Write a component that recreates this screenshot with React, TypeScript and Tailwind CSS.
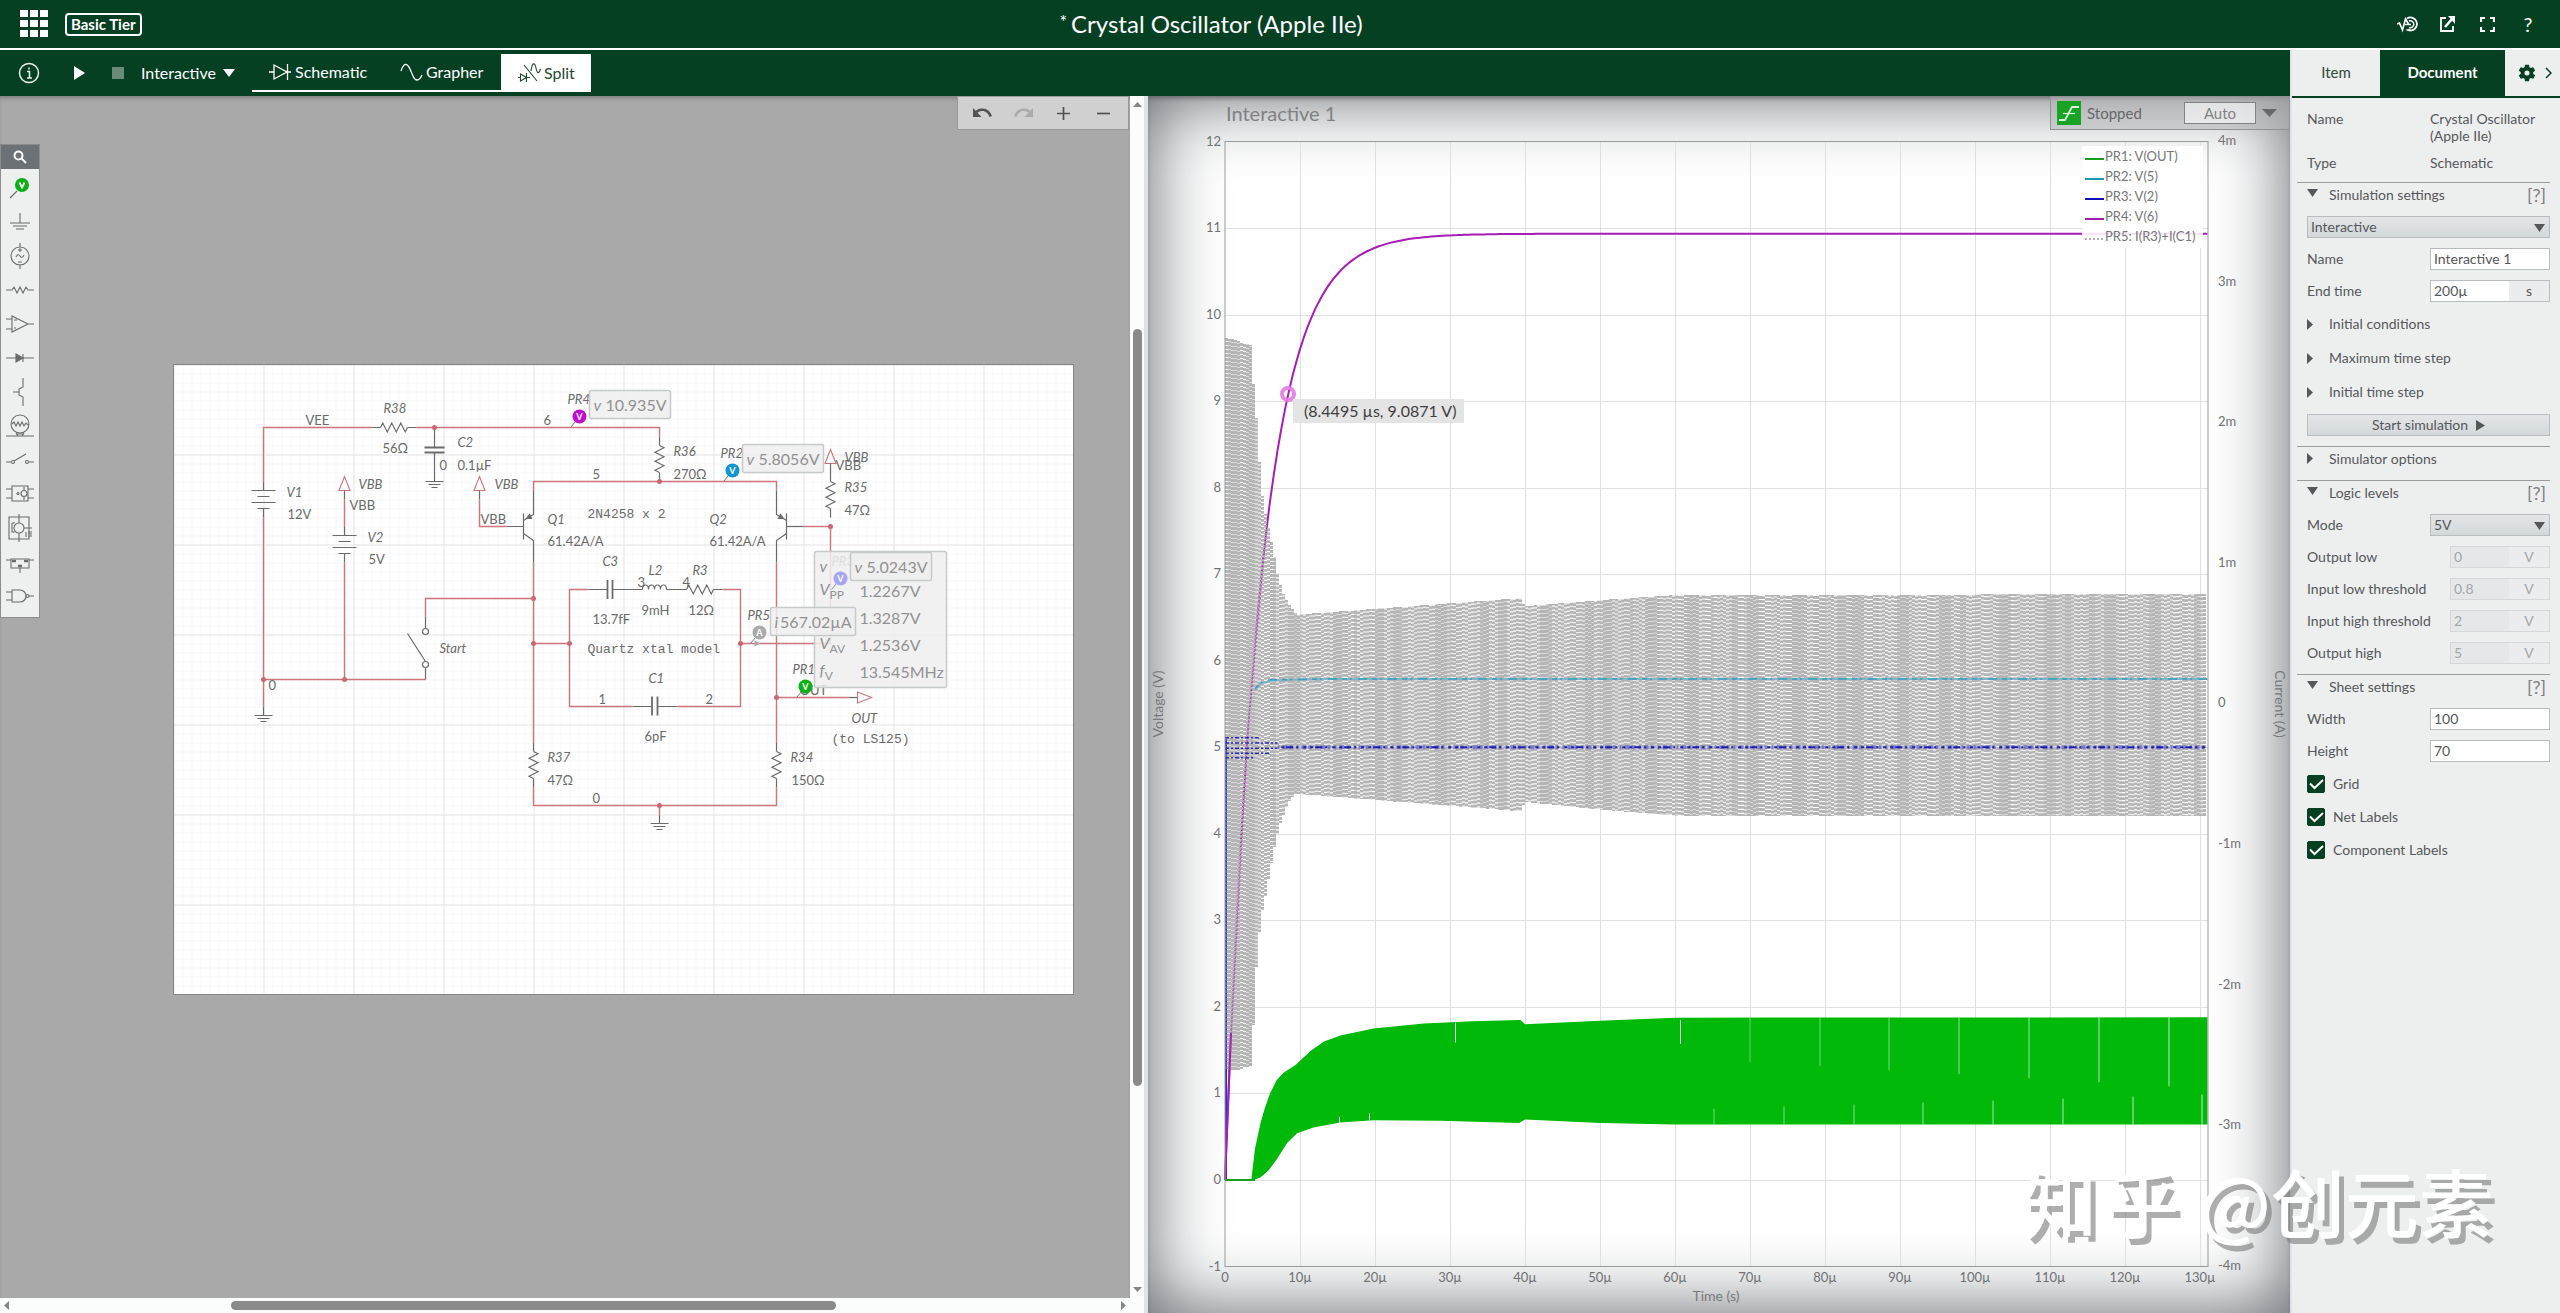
import { useState } from "react";
import type { ReactNode } from "react";

const LATO = "Lato, 'Open Sans', sans-serif";
const MONO = "'Liberation Mono', monospace";

/* ---------- schematic ---------- */

const WIRE = "#cf747c";
const PART = "#6b6b6b";

const wires = [
  "M90 117V63H198",
  "M243 63H486V72",
  "M90 153V342",
  "M90 315H252",
  "M171 135V162M171 198V315",
  "M252 252V234H360",
  "M306 135V162H333",
  "M360 126V117H603V126",
  "M360 198V378",
  "M360 279H396",
  "M414 225H396V342H459",
  "M549 225H567V342H504",
  "M567 279H657V162",
  "M630 162H657",
  "M603 198V378",
  "M603 333H675",
  "M360 423V441H603V423",
  "M486 441V450",
];

const leads = [
  "M90 117V126M90 144V153M90 342V351",
  "M78 126H102M84 132H96M78 138H102M84 144H96",
  "M171 126V135M171 162V171M171 189V198",
  "M159 171H183M165 177H177M159 183H183M165 189H177",
  "M198 63H207M234 63H243",
  "M261 63V83M261 88V117",
  "M252 252V264M252 303V315M252 297L234 269",
  "M306 126V135M333 162H350",
  "M350 149V175M350 156L360 150V126M350 169L360 176V198",
  "M613 149V175M613 156L603 150V126M613 169L603 176V198",
  "M613 162H630",
  "M414 225H434M439 225H469M493 225H513M540 225H549",
  "M459 342H478M484 342H504",
  "M486 72V81M486 108V117",
  "M657 99V117M657 144V153",
  "M360 378V387M360 414V423",
  "M603 378V387M603 414V423",
  "M675 333H684",
  "M486 450V459",
];

const dots = [
  [261, 63], [90, 315], [171, 315], [360, 234], [360, 279], [396, 279],
  [567, 279], [486, 117], [657, 162], [603, 333], [486, 441],
];

type Label = [number, number, string, ("i" | "m")?];

const labels: Label[] = [
  [132, 60, "VEE"],
  [210, 48, "R38", "i"],
  [209, 88, "56Ω"],
  [284, 82, "C2", "i"],
  [284, 105, "0.1µF"],
  [266, 105, "0"],
  [113, 132, "V1", "i"],
  [114, 154, "12V"],
  [185, 124, "VBB", "i"],
  [176, 145, "VBB"],
  [194, 177, "V2", "i"],
  [195, 199, "5V"],
  [321, 124, "VBB", "i"],
  [307, 159, "VBB"],
  [374, 159, "Q1", "i"],
  [374, 181, "61.42A/A"],
  [370, 60, "6"],
  [419, 114, "5"],
  [414, 153, "2N4258 x 2", "m"],
  [266, 288, "Start", "i"],
  [95, 325, "0"],
  [425, 339, "1"],
  [532, 339, "2"],
  [429, 201, "C3", "i"],
  [419, 259, "13.7fF"],
  [475, 210, "L2", "i"],
  [464, 222, "3"],
  [509, 222, "4"],
  [519, 210, "R3", "i"],
  [468, 250, "9mH"],
  [515, 250, "12Ω"],
  [414, 288, "Quartz xtal model", "m"],
  [475, 318, "C1", "i"],
  [471, 376, "6pF"],
  [374, 397, "R37", "i"],
  [374, 420, "47Ω"],
  [419, 438, "0"],
  [617, 397, "R34", "i"],
  [618, 420, "150Ω"],
  [500, 91, "R36", "i"],
  [500, 114, "270Ω"],
  [394, 39, "PR4", "i"],
  [547, 93, "PR2", "i"],
  [574, 255, "PR5", "i"],
  [619, 309, "PR1", "i"],
  [626, 330, "OUT"],
  [671, 97, "VBB", "i"],
  [662, 105, "VBB"],
  [671, 127, "R35", "i"],
  [671, 150, "47Ω"],
  [536, 159, "Q2", "i"],
  [536, 181, "61.42A/A"],
  [678, 358, "OUT", "i"],
  [658, 378, "(to LS125)", "m"],
];

function Resistor({ x, y, vertical }: { x: number; y: number; vertical?: boolean }) {
  return (
    <path
      transform={`translate(${x} ${y})${vertical ? " rotate(90)" : ""}`}
      d="M0 0l2.25-4.5 4.5 9 4.5-9 4.5 9 4.5-9 4.5 9L27 0"
    />
  );
}

function Ground({ x, y }: { x: number; y: number }) {
  return <path d={`M${x - 9} ${y}h18M${x - 6} ${y + 3}h12M${x - 3} ${y + 6}h6`} />;
}

function Probe({ x, y, color, letter = "V", opacity = 1 }: { x: number; y: number; color: string; letter?: string; opacity?: number }) {
  return (
    <g opacity={opacity}>
      <path d={`M${x - 4} ${y + 5}L${x - 9} ${y + 11}`} stroke="#777" />
      <circle cx={x} cy={y} r="7" fill={color} />
      <text x={x} y={y + 3} textAnchor="middle" fontSize="9" fontWeight="700" fill="#fff">{letter}</text>
    </g>
  );
}

function Reading({ x, y, w, symbol, value }: { x: number; y: number; w: number; symbol: string; value: string }) {
  return (
    <g>
      <rect x={x} y={y} width={w} height="28" rx="2" fill="#efefef" fillOpacity=".85" stroke="#c6caca" strokeWidth="1.5" />
      <text x={x + 4} y={y + 20} fontSize="16" fontStyle="italic" fill="#929292">{symbol}</text>
      <text x={x + w - 4} y={y + 20} fontSize="16" textAnchor="end" fill="#929292">{value}</text>
    </g>
  );
}

function Schematic() {
  return (
    <svg className="block shrink-0 bg-white outline -outline-offset-1 outline-[#858585]" width="901" height="631" viewBox="-0.5 -0.5 901 631" fontFamily={LATO}>
      <defs>
        <pattern id="minor" width="9" height="9" patternUnits="userSpaceOnUse">
          <path d="M0 0H9M0 0V9" stroke="#f0f0f0" fill="none" />
        </pattern>
        <pattern id="major" width="90" height="90" patternUnits="userSpaceOnUse">
          <path d="M0 0H90M0 0V90" stroke="#e6e6e6" strokeWidth="2" fill="none" />
        </pattern>
      </defs>
      <rect width="900" height="630" fill="url(#minor)" />
      <rect width="900" height="630" fill="url(#major)" />

      <g fill="none" stroke={WIRE} strokeWidth="1.4">
        {wires.map((d) => <path key={d} d={d} />)}
        <path fill="#fff" d="M171 112l5.5 14h-11zM306 112l5.5 14h-11zM657 85l5.5 14h-11zM698 333l-14-5.5v11z" strokeWidth="1.1" />
      </g>
      <g fill="none" stroke={PART} strokeWidth="1.2">
        {leads.map((d) => <path key={d} d={d} />)}
        <Resistor x={207} y={63} />
        <Resistor x={513} y={225} />
        <Resistor x={486} y={81} vertical />
        <Resistor x={657} y={117} vertical />
        <Resistor x={360} y={387} vertical />
        <Resistor x={603} y={387} vertical />
        <Ground x={90} y={351} />
        <Ground x={261} y={117} />
        <Ground x={486} y={459} />
        <path d="M469 225c0-6 6-6 6 0c0-6 6-6 6 0c0-6 6-6 6 0c0-6 6-6 6 0" />
        <path strokeWidth="1.8" d="M251 83h20M251 88h20M434 215.500v19M439 215.500v19M478.500 332v19M484 332v19" />
        <circle cx="252" cy="267" r="3" fill="#fff" />
        <circle cx="252" cy="300" r="3" fill="#fff" />
        <path fill={PART} d="M353 154l3-4 2 4zM610 154l-3-4-2 4z" />
      </g>
      <g fill="#c96872">
        {dots.map(([x, y]) => <circle key={`${x}-${y}`} cx={x} cy={y} r="2.500" />)}
      </g>
      <g fontSize="13" fill="#6a6a6a">
        {labels.map(([x, y, text, kind]) => (
          <text key={`${x}-${y}`} x={x} y={y} fontStyle={kind === "i" ? "italic" : undefined} fontFamily={kind === "m" ? MONO : undefined}>
            {text}
          </text>
        ))}
        <text x="658" y="201" fontStyle="italic">PR3</text>
      </g>
      <path d="M581 276l6 3-6 3z" fill="#aaa" />
      <Probe x={406} y={52} color="#c40bd0" />
      <Probe x={559} y={106} color="#1296d3" />
      <Probe x={586} y={268} color="#aaaaaa" letter="A" />
      <Probe x={632} y={322} color="#0db014" />
      <Reading x={416} y={26} w={81} symbol="v" value="10.935V" />
      <Reading x={569} y={80} w={81} symbol="v" value="5.8056V" />

      <rect x="641" y="187" width="132" height="136" rx="2" fill="#efefef" fillOpacity=".86" stroke="#c6caca" strokeWidth="1.5" />
      <Probe x={667} y={214} color="#8c8cf5" opacity={0.75} />
      <g fontSize="16" fill="#929292">
        <text x="646" y="207" fontStyle="italic">v</text>
        <text x="646" y="230"><tspan fontStyle="italic">V</tspan><tspan dy="4" fontSize="12">PP</tspan></text>
        <text x="646" y="284"><tspan fontStyle="italic">V</tspan><tspan dy="4" fontSize="12">AV</tspan></text>
        <text x="646" y="311"><tspan fontStyle="italic">f</tspan><tspan dy="4" fontSize="12">V</tspan></text>
        <text x="686" y="232">1.2267V</text>
        <text x="686" y="259">1.3287V</text>
        <text x="686" y="286">1.2536V</text>
        <text x="686" y="313">13.545MHz</text>
      </g>
      <Reading x={677} y={188} w={81} symbol="v" value="5.0243V" />
      <Reading x={597} y={243} w={85} symbol="i" value="567.02µA" />
    </svg>
  );
}

/* ---------- grapher ---------- */

const X0 = 77;
const Y0 = 1084;
const TOP = 45;
const RIGHT = 1060;
const BOTTOM = 1170;
const tx = (us: number) => X0 + us * 7.5;
const vy = (v: number) => Y0 - v * 86.54;

type Curve = [number, number][];

const currentHigh: Curve = [
  [0, 9.73], [1.5, 9.71], [3.4, 9.65], [3.8, 9.2], [4.2, 8.8], [4.8, 8.05], [5.15, 7.8], [6.3, 7.34], [6.9, 7.05],
  [7.6, 6.81], [8.5, 6.65], [9.6, 6.53], [10.5, 6.54], [38.9, 6.72], [39.4, 6.72], [40, 6.63], [50, 6.7], [60, 6.76], [131, 6.77],
];
const currentLow: Curve = [
  [0, 1.27], [2, 1.27], [3.6, 1.33], [4, 2.25], [4.5, 2.78], [4.8, 3.04], [5.4, 3.28], [6, 3.57], [6.7, 3.89], [7.4, 4.13],
  [8.5, 4.37], [9.4, 4.46], [11, 4.45], [38.9, 4.265], [39.5, 4.27], [40, 4.37], [50, 4.28], [60, 4.21], [131, 4.21],
];
const outHigh: Curve = [
  [3.5, 0], [4, 0.36], [4.7, 0.65], [5.3, 0.83], [6, 1], [6.9, 1.156], [7.8, 1.24], [9.4, 1.33], [11.4, 1.49], [13.2, 1.6],
  [15.400, 1.67], [19.800, 1.75], [26.5, 1.81], [33, 1.835], [39.4, 1.85], [40, 1.8], [50, 1.84], [60, 1.875], [131, 1.88],
];
const outLow: Curve = [
  [3.8, 0], [4.7, 0.03], [5.8, 0.11], [6.9, 0.24], [8.3, 0.43], [9.6, 0.54], [11.8, 0.605], [15.4, 0.663], [19.8, 0.69],
  [28.7, 0.685], [39.200, 0.66], [40, 0.7], [50, 0.66], [60, 0.64], [131, 0.64],
];

function sample(curve: Curve, t: number) {
  for (let i = 1; i < curve.length; i++) {
    const [t1, v1] = curve[i];
    if (t <= t1) {
      const [t0, v0] = curve[i - 1];
      return v0 + ((v1 - v0) * (t - t0)) / (t1 - t0);
    }
  }
  return curve[curve.length - 1][1];
}

const toPoints = (c: Curve) => c.map(([t, v]) => `${tx(t).toFixed(1)},${vy(v).toFixed(1)}`).join(" ");

const outBand = `${toPoints(outHigh)} ${toPoints([...outLow].reverse())}`;

// capacitor charge curve of node 6, tau = 4.752us
const v6: Curve = Array.from({ length: 263 }, (_, i) => {
  const t = i * 0.5;
  return [Math.min(t, 131), 10.935 * (1 - Math.exp(-t / 4.752))];
});

const currentColumns = Array.from({ length: 327 }, (_, i) => {
  const x = X0 + 1.5 + i * 3;
  const t = (x - X0) / 7.5;
  const dense = Math.sin(i * 0.9) + Math.sin(i * 0.37) > 0.5;
  return {
    x,
    y1: Math.round(vy(sample(currentHigh, t))),
    y2: Math.round(vy(sample(currentLow, t))),
    offset: 1.2 * Math.sin(i * 0.7) + 0.8 * Math.sin(i * 2.1),
    dash: dense ? "3.5 0.5" : "2.9 1.1",
  };
});

const slitsHigh = [602, 672, 741, 811, 881, 951, 1021];
const slitsLow = [566, 636, 706, 775, 845, 915, 985, 1054];

const legend = [
  { name: "PR1: V(OUT)", color: "#16a01c" },
  { name: "PR2: V(5)", color: "#2197b8" },
  { name: "PR3: V(2)", color: "#1210b8" },
  { name: "PR4: V(6)", color: "#a41bb0" },
  { name: "PR5: I(R3)+I(C1)", color: "#b0b0b0", dash: "2 2" },
];

function Chart() {
  return (
    <svg className="block h-full w-full" viewBox="0 0 1142 1217" fontFamily={LATO}>
      <g stroke="#e0e0e2" fill="none">
        {Array.from({ length: 13 }, (_, i) => (
          <path key={`v${i}`} d={`M${152.5 + i * 75} ${TOP}V${BOTTOM}`} />
        ))}
        {Array.from({ length: 12 }, (_, i) => (
          <path key={`h${i}`} d={`M${X0} ${Math.round(vy(i)) + 0.5}H${RIGHT}`} />
        ))}
      </g>

      {/* node voltages */}
      <path d={`M${X0 + 1} ${Y0}V${vy(5.1)}`} stroke="#2222d0" strokeWidth="2" />
      <polyline points={toPoints(v6)} fill="none" stroke="#a81cb8" strokeWidth="2" />

      {/* probe current, right axis */}
      <g stroke="#b5b5b5" strokeWidth="3">
        {currentColumns.map((c) => (
          <path key={c.x} d={`M${c.x} ${c.y1}V${c.y2}`} strokeDasharray={c.dash} strokeDashoffset={c.offset} />
        ))}
      </g>

      <path d={`M${X0 + 1} ${Y0}V${vy(5.1)}`} stroke="#3030d8" strokeWidth="2" opacity=".7" />
      <path d={`M${tx(0)} ${Y0}L${tx(0.8)} ${vy(1.7)}`} stroke="#a81cb8" strokeWidth="2" />
      <path d={`M${tx(0.7)} ${vy(1.5)}L${tx(3.1)} ${vy(5.25)}L${tx(5.600)} ${vy(7.57)}`} stroke="#a83cb8" strokeWidth="1.500" fill="none" strokeDasharray="2 2" opacity=".7" />
      <polyline points={toPoints([[4, 5.66], [4.8, 5.74], [6, 5.77], [9, 5.78], [14, 5.79], [131, 5.79]])} fill="none" stroke="#7fb5c6" strokeWidth="2" />
      <polyline points={toPoints([[4, 5.68], [4.8, 5.75], [6, 5.78], [14, 5.79], [131, 5.79]])} fill="none" stroke="#3a9dbd" strokeWidth="1.500" strokeDasharray="5 3 2 6 9 5" />
      <g stroke="#2a2ac4" strokeWidth="1.500" strokeDasharray="4 2 2 2">
        <path d={`M${X0} ${vy(5.11)}H${tx(4.5)}`} />
        <path d={`M${X0} ${vy(5.05)}H${tx(7)}`} />
        <path d={`M${X0} ${vy(4.99)}H${tx(7)}`} />
        <path d={`M${X0} ${vy(4.93)}H${tx(6)}`} />
        <path d={`M${X0} ${vy(4.88)}H${tx(4)}`} />
      </g>
      <path d={`M${tx(7)} ${vy(5)}H${RIGHT}`} stroke="#7c7cc0" strokeWidth="4" strokeDasharray="2 3 5 2 3 4" />
      <path d={`M${tx(7.500)} ${vy(5)}H${RIGHT}`} stroke="#1c1cb4" strokeWidth="2" strokeDasharray="3 2 7 3 2 5 3 4" />

      <path d={`M${X0} ${Y0}H${tx(4)}`} stroke="#1d9c1d" strokeWidth="2" />
      <polygon points={outBand} fill="#00b909" />
      <g stroke="#e8fbe8">
        <path d={`M307.500 ${vy(1.82)}v20M191.500 ${vy(0.66)}v-6M221.500 ${vy(0.69)}v-7M532.500 ${vy(1.85)}v24`} />
        {slitsHigh.map((x, i) => (
          <path key={x} d={`M${x} ${vy(1.88)}v${45 + i * 4}`} opacity={0.4 + i * 0.07} />
        ))}
        {slitsLow.map((x, i) => (
          <path key={x} d={`M${x} ${vy(0.64)}v${-16 - i * 2}`} opacity={0.5 + i * 0.05} />
        ))}
      </g>

      <rect x={X0} y={TOP + 0.5} width={RIGHT - X0} height={BOTTOM - TOP} fill="none" stroke="#9a9a9a" />

      {/* cursor */}
      <circle cx="140" cy="298" r="6" fill="none" stroke="#e27ae4" strokeWidth="4" opacity=".9" />
      <rect x="145" y="303" width="171" height="24" fill="#e4e4e4" />
      <text x="156" y="321" fontSize="16" fill="#3f3f3f">(8.4495 µs, 9.0871 V)</text>

      <rect x="934" y="50" width="121" height="102" fill="#fff" fillOpacity=".88" />
      {legend.map((item, i) => (
        <g key={item.name}>
          <path d={`M937 ${63 + i * 20}h19`} stroke={item.color} strokeWidth="2" strokeDasharray={item.dash} />
          <text x="957" y={65 + i * 20} fontSize="13" fill="#767779">{item.name}</text>
        </g>
      ))}

      <g fontSize="13" fill="#6f7173">
        {Array.from({ length: 14 }, (_, i) => (
          <text key={`l${i}`} x="73" y={vy(i - 1) + 4} textAnchor="end">{i - 1}</text>
        ))}
        {Array.from({ length: 9 }, (_, i) => (
          <text key={`r${i}`} x="1070" y={TOP + i * 140.6 + 4}>{i === 4 ? "0" : `${4 - i}m`}</text>
        ))}
        {Array.from({ length: 14 }, (_, i) => (
          <text key={`x${i}`} x={77 + i * 75} y="1186" textAnchor="middle">{i === 0 ? "0" : `${i * 10}µ`}</text>
        ))}
      </g>
      <g fontSize="14" fill="#76797c" textAnchor="middle">
        <text x="568" y="1205">Time (s)</text>
        <text transform="translate(15 608) rotate(-90)">Voltage (V)</text>
        <text transform="translate(1127 608) rotate(90)">Current (A)</text>
      </g>
      <text x="78" y="25" fontSize="20" fill="#7f8285">Interactive 1</text>
    </svg>
  );
}

/* ---------- part palette ---------- */

const parts: { name: string; art: ReactNode }[] = [
  { name: "Probe", art: <><path d="M4 24l7-7" /><circle cx="16" cy="11" r="7" fill="#0db014" stroke="none" /><path d="M13.500 8.500l2.500 5 2.500-5" stroke="#fff" strokeWidth="1.800" /></> },
  { name: "Ground", art: <path d="M14 5v10M4 15h20M7 18h14M10 21h8" /> },
  { name: "Source", art: <><circle cx="14" cy="14" r="9" /><path d="M14 1v4M14 23v4M10 15q2-4 4-1t4-1M12 20h4M12 8h4M14 6v4" /></> },
  { name: "Resistor", art: <path d="M0 14h6l2-3 3 6 3-6 3 6 3-6 2 3h6" /> },
  { name: "Op amp", art: <path d="M6 6v16l16-8zM0 9h6M0 19h6M22 14h6M8 10h3M8 18h2" /> },
  { name: "Diode", art: <><path d="M0 14h28M17 10v8" /><path d="M10 10l7 4-7 4z" fill={PART} /></> },
  { name: "Transistor", art: <path d="M17 0v9l-4 2v6l4 2v9M7 14h6" /> },
  { name: "Lamp", art: <><circle cx="14" cy="12" r="9" /><path d="M0 24h28M6 12l2-2 2 4 2-4 2 4 2-4 2 4 2-3 2 2M10 21l2 3M18 21l-2 3M10 22h8" /></> },
  { name: "Switch", art: <><circle cx="7" cy="16" r="1.500" /><circle cx="21" cy="16" r="1.500" /><path d="M0 16h5M23 16h5M8 15l12-7" /></> },
  { name: "Relay", art: <><path d="M6 6h16v15H6zM0 9h6M0 18h6M22 9h6M22 18h6M18 7v3M18 17v3" /><circle cx="18" cy="13.500" r="3" /><circle cx="12" cy="13.500" r="1" /></> },
  { name: "Motor", art: <><path d="M3 3h20v22H3zM13 0v9M13 19v9M6 9v9h3M6 9h3M18 14h8M20 18v5M22 18h4M22 20h4M22 22h4" /><circle cx="13" cy="14" r="5" /></> },
  { name: "Connector", art: <><path d="M5 11h18v9H5zM0 12h5M23 12h5M14 20v5" /><path d="M6 13h4M18 13h4M12 18h4" strokeWidth="2.500" /></> },
  { name: "Gate", art: <><path d="M6 8h8a6 6 0 0 1 0 12H6zM0 10h6M0 18h6M23 14h5" /><circle cx="21.500" cy="14" r="1.500" /></> },
];

function Palette() {
  return (
    <aside className="absolute left-0 top-12 w-10 border border-[#8c8c8c] bg-[#eeefef]">
      <button aria-label="Search parts" className="flex h-6 w-full items-center justify-center bg-[#6c7175]">
        <svg width="14" height="14" viewBox="0 0 14 14" fill="none" stroke="#fff" strokeWidth="2">
          <circle cx="5.500" cy="5.500" r="4" />
          <path d="M8.500 8.500l4.500 4.500" />
        </svg>
      </button>
      <div className="flex flex-col pb-1 pt-0.5">
        {parts.map((p) => (
          <button key={p.name} aria-label={p.name} className="flex h-[34px] items-center justify-center">
            <svg width="28" height="28" viewBox="0 0 28 28" fill="none" stroke="#6b6b6b" strokeWidth="1.1">{p.art}</svg>
          </button>
        ))}
      </div>
    </aside>
  );
}

/* ---------- side panel ---------- */

function Arrow({ dir = "down", size = 11 }: { dir?: "down" | "right"; size?: number }) {
  return dir === "down" ? (
    <svg width={size} height="8" viewBox="0 0 12 8" preserveAspectRatio="none" fill="currentColor"><path d="M0 0h12L6 8z" /></svg>
  ) : (
    <svg width="6" height="11" viewBox="0 0 6 11" fill="currentColor"><path d="M0 0l6 5.500L0 11z" /></svg>
  );
}

function Section({ title, help, children }: { title: string; help?: boolean; children?: ReactNode }) {
  return (
    <section className="ml-[5px] border-t border-[#9a9c9d] pb-2.5 pl-2.5">
      <div className="flex h-[23px] items-center">
        <button className="flex flex-1 items-center gap-[11px] text-left">
          <span className={children ? "-mt-1 w-[11px]" : "w-[11px]"}><Arrow dir={children ? "down" : "right"} /></span>
          {title}
        </button>
        {help && <button aria-label={`${title} help`} className="mr-1 text-lg leading-none text-[#7c7f80]">[?]</button>}
      </div>
      {children && <div className="mt-2.5 flex flex-col gap-2.5">{children}</div>}
    </section>
  );
}

function SubSection({ title }: { title: string }) {
  return (
    <button className="flex h-6 items-center gap-4 text-left">
      <Arrow dir="right" />
      {title}
    </button>
  );
}

function Select({ id, value, options }: { id: string; value: string; options: string[] }) {
  const [v, setV] = useState(value);
  return (
    <div className="relative w-full">
      <select id={id} aria-label={id} value={v} onChange={(e) => setV(e.target.value)} className="block h-[22px] w-full appearance-none border border-[#b9bdbf] bg-linear-to-b from-[#e3e6e8] to-[#d3d8db] pl-[3px]">
        {options.map((o) => <option key={o}>{o}</option>)}
      </select>
      <span className="pointer-events-none absolute right-[5px] top-2"><Arrow /></span>
    </div>
  );
}

function Field({ label, value, unit, disabled }: { label: string; value: string; unit?: string; disabled?: boolean }) {
  const [v, setV] = useState(value);
  const id = label.toLowerCase().replace(/ /g, "-");
  return (
    <div className="flex items-center justify-between">
      <label htmlFor={id}>{label}</label>
      <div className={`flex h-[22px] border ${disabled ? "w-[100px] border-[#d5d7d8] text-[#a4a6a7]" : "w-[120px] border-[#b9bdbf]"}`}>
        <input id={id} value={v} disabled={disabled} onChange={(e) => setV(e.target.value)} className={`min-w-0 flex-1 px-[3px] ${disabled ? "bg-[#e5e8e8]" : "bg-white"}`} />
        {unit && <span className="flex w-10 items-center justify-center bg-[#ebeced]">{unit}</span>}
      </div>
    </div>
  );
}

function Check({ label }: { label: string }) {
  const [on, setOn] = useState(true);
  return (
    <label className="flex h-[23px] items-center gap-2">
      <span className="relative flex h-[18px] w-[18px]">
        <input type="checkbox" checked={on} onChange={() => setOn(!on)} className="h-[18px] w-[18px] appearance-none rounded-xs border border-[#054023] bg-white checked:bg-[#054023]" />
        {on && (
          <svg className="pointer-events-none absolute inset-0" width="18" height="18" viewBox="0 0 18 18" fill="none" stroke="#fff" strokeWidth="2"><path d="M3 8.500l4.500 4.500L16 5" /></svg>
        )}
      </span>
      {label}
    </label>
  );
}

function SidePanel() {
  return (
    <aside className="flex w-[270px] shrink-0 flex-col border-l-2 border-[#dfe3e7] bg-[#edefef] text-sm text-[#55585a]">
      <div className="flex h-12 shrink-0 border-b-2 border-[#054023] text-[15px]">
        <button className="w-[88px] text-[#2f4a3b]">Item</button>
        <button className="w-[125px] bg-[#054023] font-bold text-white">Document</button>
        <button aria-label="Settings" className="flex flex-1 items-center justify-center gap-2 pl-1 text-[#054023]">
          <svg width="20" height="20" viewBox="0 0 24 24" fill="currentColor">
            <path d="M19.400 13a7.500 7.500 0 0 0 0-2l2.100-1.600a.5.5 0 0 0 .1-.7l-2-3.400a.5.5 0 0 0-.6-.2l-2.500 1a7 7 0 0 0-1.700-1L14.500 2.400a.5.5 0 0 0-.5-.4h-4a.5.5 0 0 0-.5.4l-.4 2.700a7 7 0 0 0-1.700 1l-2.500-1a.5.5 0 0 0-.6.2l-2 3.400a.5.5 0 0 0 .1.700L4.500 11a7.500 7.500 0 0 0 0 2l-2.100 1.600a.5.5 0 0 0-.1.700l2 3.400c.1.200.4.300.6.200l2.500-1a7 7 0 0 0 1.700 1l.4 2.700c0 .2.200.4.500.4h4c.3 0 .5-.2.5-.4l.4-2.700a7 7 0 0 0 1.700-1l2.500 1c.2.100.5 0 .6-.2l2-3.400a.5.5 0 0 0-.1-.7zM12 15a3 3 0 1 1 0-6 3 3 0 0 1 0 6z" />
          </svg>
          <svg width="7" height="12" viewBox="0 0 7 12" fill="none" stroke="currentColor" strokeWidth="1.500"><path d="M1 1l5 5-5 5" /></svg>
        </button>
      </div>

      <div className="pr-2.5 pt-3">
        <dl className="grid grid-cols-[123px_1fr] gap-y-2.5 pb-[11px] pl-[15px] leading-[17px]">
          <dt>Name</dt>
          <dd className="-mr-2">Crystal Oscillator<br />(Apple IIe)</dd>
          <dt>Type</dt>
          <dd>Schematic</dd>
        </dl>

        <Section title="Simulation settings" help>
          <Select id="Analysis" value="Interactive" options={["Interactive", "Transient", "AC Sweep"]} />
          <Field label="Name" value="Interactive 1" />
          <Field label="End time" value="200µ" unit="s" />
          <SubSection title="Initial conditions" />
          <SubSection title="Maximum time step" />
          <SubSection title="Initial time step" />
          <button className="flex h-[22px] items-center justify-center gap-2 border border-[#b9bdbf] bg-linear-to-b from-[#e3e6e8] to-[#d3d8db]">
            Start simulation
            <svg width="9" height="11" viewBox="0 0 9 11" fill="currentColor"><path d="M0 0l9 5.500L0 11z" /></svg>
          </button>
        </Section>

        <Section title="Simulator options" />

        <Section title="Logic levels" help>
          <div className="flex items-center justify-between">
            <label htmlFor="Mode">Mode</label>
            <div className="w-[120px]"><Select id="Mode" value="5V" options={["5V", "3.3V", "Custom"]} /></div>
          </div>
          <Field label="Output low" value="0" unit="V" disabled />
          <Field label="Input low threshold" value="0.8" unit="V" disabled />
          <Field label="Input high threshold" value="2" unit="V" disabled />
          <Field label="Output high" value="5" unit="V" disabled />
        </Section>

        <Section title="Sheet settings" help>
          <Field label="Width" value="100" />
          <Field label="Height" value="70" />
          <Check label="Grid" />
          <Check label="Net Labels" />
          <Check label="Component Labels" />
        </Section>
      </div>
    </aside>
  );
}

/* ---------- bars ---------- */

function Header() {
  return (
    <header className="grid h-[50px] shrink-0 grid-cols-[1fr_auto_1fr] items-center border-b-2 border-white bg-[#054023] text-white">
      <div className="flex items-center gap-[17px] pl-5">
        <button aria-label="Apps">
          <svg width="28" height="28" viewBox="0 0 28 28" fill="#fff">
            {[0, 10, 20].map((y) => [0, 10, 20].map((x) => <rect key={`${x}-${y}`} x={x} y={y} width="8" height="7" />))}
          </svg>
        </button>
        <a href="#tier" className="rounded border-2 border-white px-1 text-[15px] font-bold leading-[19px]">Basic Tier</a>
      </div>
      <h1 className="flex gap-1 pr-[138px] text-2xl leading-none">
        <span className="text-lg leading-none">*</span>
        <span>Crystal Oscillator (Apple IIe)</span>
      </h1>
      <div className="flex items-center justify-end gap-[25px] pr-6">
        <button aria-label="Analyses">
          <svg width="22" height="18" viewBox="0 0 22 18" fill="none" stroke="#fff" strokeWidth="1.700">
            <path d="M0 9l2.500-1L5.500 15 8.500 4l3 5" /><path d="M10 3.500a6.500 6.500 0 1 1 1 11.500" /><path d="M12 6a3.500 3.500 0 1 1 0 6.500M8 9.500h6M9.500 15h4" strokeWidth="1.500" />
          </svg>
        </button>
        <button aria-label="Open in new window" className="-ml-1">
          <svg width="15" height="16" viewBox="0 0 15 16" fill="none" stroke="#fff" strokeWidth="1.800">
            <path d="M6 2H1v13h12v-5" /><path d="M5 11l7-8" strokeWidth="2.600" /><path d="M8 0h7v8z" fill="#fff" stroke="none" />
          </svg>
        </button>
        <button aria-label="Full screen">
          <svg width="15" height="15" viewBox="0 0 15 15" fill="none" stroke="#fff" strokeWidth="2.200"><path d="M1 5V1h4M10 1h4v4M14 10v4h-4M5 14H1v-4" /></svg>
        </button>
        <button aria-label="Help" className="w-4 text-xl leading-none">?</button>
      </div>
    </header>
  );
}

function Toolbar() {
  return (
    <nav className="flex h-[46px] shrink-0 items-center bg-[#054023] text-base text-white">
      <button aria-label="Info" className="ml-[18px]">
        <svg width="22" height="22" viewBox="0 0 22 22" fill="none" stroke="#e8efe9" strokeWidth="1.500">
          <circle cx="11" cy="11" r="9.500" /><path d="M9 9.500h2.500V16M9 16h5M11 5.500v2" />
        </svg>
      </button>
      <button aria-label="Run" className="ml-[34px]"><svg width="11" height="14" viewBox="0 0 11 14" fill="#fff"><path d="M0 0l11 7-11 7z" /></svg></button>
      <button aria-label="Stop" className="ml-[27px] h-3 w-3 bg-[#6b8b79]" />
      <button className="ml-[17px] flex w-[94px] items-center justify-between">Interactive <Arrow size={12} /></button>
      <div className="ml-[17px] mt-1 flex h-[38px] self-start">
        <button className="flex w-[133px] items-center gap-1 border-b-2 border-white pl-[17px]">
          <svg width="22" height="18" viewBox="0 0 22 18" fill="none" stroke="#fff" strokeWidth="1.300"><path d="M0 9h5M19 9h3M5 2v14l13-7zM18.500 1v16" /></svg>
          Schematic
        </button>
        <button className="flex w-[116px] items-center gap-[3px] border-b-2 border-white pl-[15px]">
          <svg width="23" height="18" viewBox="0 0 23 18" fill="none" stroke="#fff" strokeWidth="1.300"><path d="M1 8C4-1 7 0 10 6l3 7c2 5 6 6 9-1" /></svg>
          Grapher
        </button>
        <button className="flex w-[90px] items-center gap-[3px] bg-white pl-[17px] text-[#1f4a33]">
          <svg width="23" height="20" viewBox="0 0 23 20" fill="none" stroke="#1f4a33" strokeWidth="1.100">
            <path d="M0 14.500h2.500M2.500 11v7l6-3.500zM8.500 10v9M8.500 14.500H12M6 2l13 16M13 8c1-9 4-9 5-3s3 6 4.500 1" />
          </svg>
          Split
        </button>
      </div>
    </nav>
  );
}

function CanvasTools() {
  return (
    <div className="absolute right-px top-0 flex h-[34px] w-[172px] border border-[#999] bg-[#d0d0d0] px-[5px] text-[#505254]">
      <button aria-label="Undo" className="flex flex-1 items-center justify-center">
        <svg width="20" height="10" viewBox="0 0 20 10"><path d="M0 0l2.700 2.700C4.500 1 7 .5 9.500.5c4.500 0 8 3 9.500 7.500l-2.500 1C15.300 5.500 12.700 3 9.500 3 7.500 3 5.800 3.500 4.500 4.700L8.500 9H0z" fill="currentColor" /></svg>
      </button>
      <button aria-label="Redo" className="flex flex-1 items-center justify-center text-[#a9abac]">
        <svg width="20" height="10" viewBox="0 0 20 10"><path d="M20 0l-2.700 2.700C15.500 1 13 .5 10.500.5 6 .5 2.500 3.500 1 8l2.500 1C4.700 5.500 7.300 3 10.500 3c2 0 3.700.5 5 1.700L11.500 9H20z" fill="currentColor" /></svg>
      </button>
      <button aria-label="Zoom in" className="flex flex-1 items-center justify-center">
        <svg width="13" height="13" viewBox="0 0 13 13" fill="none" stroke="currentColor" strokeWidth="1.700"><path d="M0 6.500h13M6.500 0v13" /></svg>
      </button>
      <button aria-label="Zoom out" className="flex flex-1 items-center justify-center">
        <svg width="13" height="13" viewBox="0 0 13 13" fill="none" stroke="currentColor" strokeWidth="1.700"><path d="M0 6.500h13" /></svg>
      </button>
    </div>
  );
}

function Canvas() {
  return (
    <div className="grid min-h-0 min-w-0 grid-cols-[1fr_14px_4px] grid-rows-[1fr_15px]">
      <div className="relative min-h-0 overflow-hidden bg-[#a9a9a9] pl-[173px] pt-[268px] shadow-[inset_0_4px_4px_-2px_#7c7c7c]">
        <Schematic />
        <Palette />
        <CanvasTools />
      </div>
      <div className="flex flex-col items-center justify-between bg-[#fbfcfc] py-1.5 text-[#858585]">
        <svg width="9" height="5" viewBox="0 0 9 5" fill="currentColor"><path d="M0 5h9L4.500 0z" /></svg>
        <div className="flex w-[9px] flex-1 flex-col pt-[222px]">
          <div className="h-[79%] rounded-full bg-[#8a8a8a]" />
        </div>
        <svg width="9" height="5" viewBox="0 0 9 5" fill="currentColor"><path d="M0 0h9L4.500 5z" /></svg>
      </div>
      <div className="row-span-2 bg-[#dfe3e7]" />
      <div className="flex items-center bg-[#fbfcfc] px-1 text-[#858585]">
        <svg width="5" height="9" viewBox="0 0 5 9" fill="currentColor"><path d="M5 0v9L0 4.500z" /></svg>
        <div className="flex-1 pl-[222px]">
          <div className="h-[9px] w-[68%] rounded-full bg-[#8a8a8a]" />
        </div>
        <svg width="5" height="9" viewBox="0 0 5 9" fill="currentColor"><path d="M0 0v9l5-4.500z" /></svg>
      </div>
      <div className="bg-[#fbfcfc]" />
    </div>
  );
}

function Grapher() {
  return (
    <div className="relative min-h-0 min-w-0 overflow-hidden bg-white shadow-[inset_0_0_76px_#5a6066,inset_0_4px_5px_-2px_#777]">
      <Chart />
      <div className="absolute right-0 top-0 flex h-[34px] w-60 items-center border border-[#909294] bg-[#b4b5b7]/50 pl-1.5 text-[15px] text-[#66686a]">
        <span className="flex h-6 w-6 items-center justify-center bg-[#18a324]">
          <svg width="20" height="18" viewBox="0 0 20 18" fill="none" stroke="#d8f5da" strokeWidth="1.800"><path d="M0 16h6L13 3h7" /><path d="M4 9.500h12" strokeWidth="1.200" /></svg>
        </span>
        <span className="ml-1.5 flex-1">Stopped</span>
        <button className="mr-1.5 flex h-[22px] w-[72px] items-center justify-center border border-[#808284] bg-white/60 text-[#808284]">Auto</button>
        <button aria-label="Trigger options" className="mr-3"><Arrow size={15} /></button>
      </div>
    </div>
  );
}

export default function App() {
  return (
    <div className="relative flex h-screen flex-col overflow-hidden font-[Lato,'Open_Sans',sans-serif]">
      <Header />
      <div className="flex min-h-0 flex-1">
        <div className="flex min-w-0 flex-1 flex-col">
          <Toolbar />
          <main className="grid min-h-0 flex-1 grid-cols-[1148fr_1142fr]">
            <Canvas />
            <Grapher />
          </main>
        </div>
        <SidePanel />
      </div>
      <div className="pointer-events-none absolute bottom-[76px] right-[67px] flex gap-5 font-['Noto_Sans_CJK_SC',sans-serif] text-[74px] font-medium leading-none text-white [text-shadow:5px_6px_0_rgb(120_120_120/0.600)]">
        <span className="flex gap-2">
          <span>知</span>
          <span>乎</span>
        </span>
        <span>@创元素</span>
      </div>
    </div>
  );
}
